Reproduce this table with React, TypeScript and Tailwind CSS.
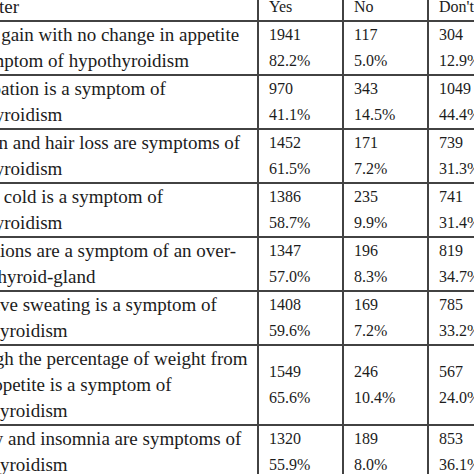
import React from 'react';

type Row = {
  lines: string[];
  yes: [string, string];
  no: [string, string];
  dk: [string, string];
};

const rows: Row[] = [
  {
    lines: ['Weight gain with no change in appetite', 'is a symptom of hypothyroidism'],
    yes: ['1941', '82.2%'],
    no: ['117', '5.0%'],
    dk: ['304', '12.9%'],
  },
  {
    lines: ['Constipation is a symptom of', 'hypothyroidism'],
    yes: ['970', '41.1%'],
    no: ['343', '14.5%'],
    dk: ['1049', '44.4%'],
  },
  {
    lines: ['Dry skin and hair loss are symptoms of', 'hypothyroidism'],
    yes: ['1452', '61.5%'],
    no: ['171', '7.2%'],
    dk: ['739', '31.3%'],
  },
  {
    lines: ['Feeling cold is a symptom of', 'hypothyroidism'],
    yes: ['1386', '58.7%'],
    no: ['235', '9.9%'],
    dk: ['741', '31.4%'],
  },
  {
    lines: ['Palpitations are a symptom of an over-', 'active thyroid-gland'],
    yes: ['1347', '57.0%'],
    no: ['196', '8.3%'],
    dk: ['819', '34.7%'],
  },
  {
    lines: ['Excessive sweating is a symptom of', 'hyperthyroidism'],
    yes: ['1408', '59.6%'],
    no: ['169', '7.2%'],
    dk: ['785', '33.2%'],
  },
  {
    lines: ['Although the percentage of weight from', 'good appetite is a symptom of', 'hyperthyroidism'],
    yes: ['1549', '65.6%'],
    no: ['246', '10.4%'],
    dk: ['567', '24.0%'],
  },
  {
    lines: ['Anxiety and insomnia are symptoms of', 'hyperthyroidism'],
    yes: ['1320', '55.9%'],
    no: ['189', '8.0%'],
    dk: ['853', '36.1%'],
  },
];

const NumCell = ({ values }: { values: string[] }) => (
  <div className="flex flex-col justify-center border-r-2 border-[#424242] pl-[10px] text-[16px] leading-[26px] whitespace-nowrap">
    {values.map((v) => (
      <span key={v}>{v}</span>
    ))}
  </div>
);

export default function App() {
  return (
    <div
      className="w-[474px] h-[474px] overflow-hidden bg-white text-[#1c1c1c]"
      style={{ fontFamily: '"Liberation Serif", "Times New Roman", serif' }}
    >
      <div className="-ml-[68px] -mt-[6px] w-[620px]">
        <div className="grid grid-cols-[327px_85px_85px_85px] border-b-2 border-[#424242]">
          <div className="border-r-2 border-[#424242] pl-[10px] text-[19px] leading-[26px] whitespace-nowrap">
            Parameter
          </div>
          <NumCell values={['Yes']} />
          <NumCell values={['No']} />
          <NumCell values={["Don't know"]} />
        </div>
        {rows.map((r) => (
          <div
            key={r.lines[0]}
            className="grid grid-cols-[327px_85px_85px_85px] border-b-2 border-[#424242]"
          >
            <div className="flex flex-col border-r-2 border-[#424242] pl-[10px] text-[19px] leading-[26px] whitespace-nowrap">
              {r.lines.map((l) => (
                <span key={l}>{l}</span>
              ))}
            </div>
            <NumCell values={r.yes} />
            <NumCell values={r.no} />
            <NumCell values={r.dk} />
          </div>
        ))}
      </div>
    </div>
  );
}
